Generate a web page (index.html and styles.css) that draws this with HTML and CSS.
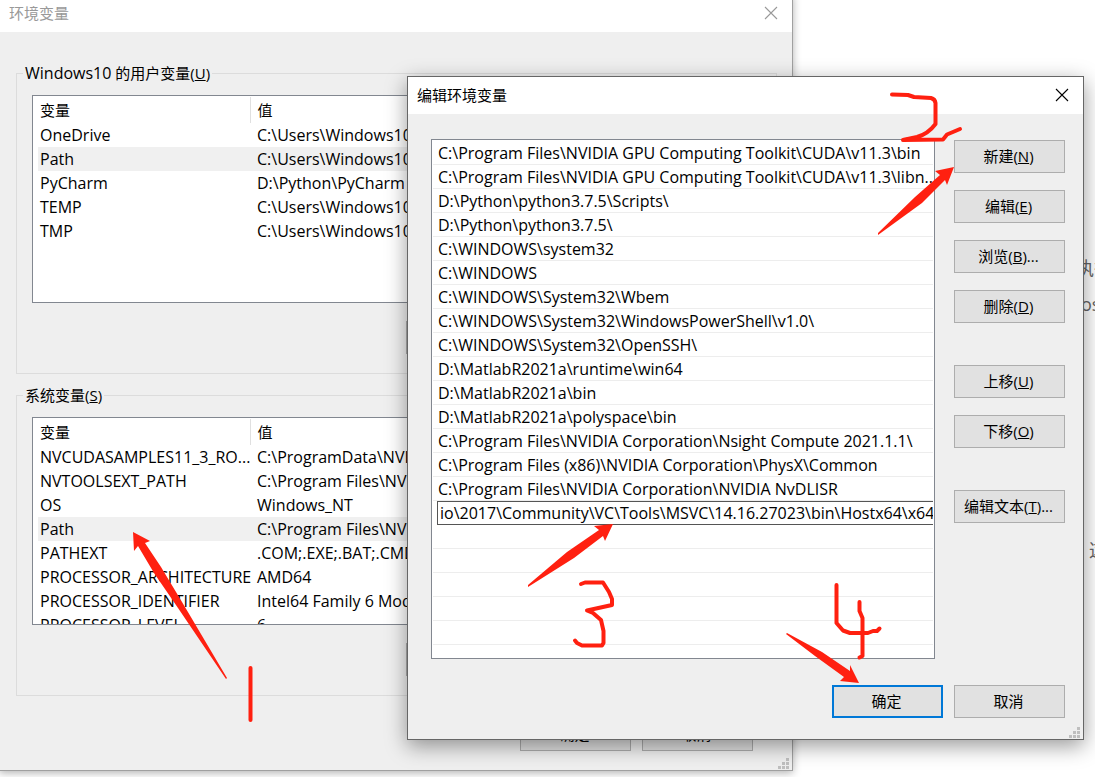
FILE: index.html
```html
<!DOCTYPE html>
<html lang="zh-CN">
<head>
    <meta charset="UTF-8">
    <title>环境变量</title>
    <link rel="stylesheet" href="styles.css">
</head>

<body>
    <div class="desktop">
        <p class="note note-run">执行</p>
        <p class="note note-os">os</p>
        <p class="note note-this">这</p>

        <section class="window env-window">
            <header class="title-bar">
                <h1>环境变量</h1>
                <button class="close" aria-label="关闭">
                    <svg width="14" height="14" viewBox="0 0 14 14"><path d="M1 1L13 13M13 1L1 13"/></svg>
                </button>
            </header>
            <div class="env-body">
                <fieldset class="group">
                    <legend><span class="latin">Windows10</span> 的用户变量(<u>U</u>)</legend>
                    <div class="list">
                        <table>
                            <tr><th>变量</th><th>值</th></tr>
                            <tr><td>OneDrive</td><td>C:\Users\Windows10\OneDrive</td></tr>
                            <tr class="selected"><td>Path</td><td>C:\Users\Windows10\AppData</td></tr>
                            <tr><td>PyCharm</td><td>D:\Python\PyCharm 2021\bin;</td></tr>
                            <tr><td>TEMP</td><td>C:\Users\Windows10\AppData</td></tr>
                            <tr><td>TMP</td><td>C:\Users\Windows10\AppData</td></tr>
                        </table>
                    </div>
                    <div class="buttons">
                        <button class="btn">新建(<u>N</u>)...</button>
                        <button class="btn">编辑(<u>E</u>)...</button>
                        <button class="btn">删除(<u>D</u>)</button>
                    </div>
                </fieldset>
                <fieldset class="group">
                    <legend>系统变量(<u>S</u>)</legend>
                    <div class="list">
                        <table>
                            <tr><th>变量</th><th>值</th></tr>
                            <tr><td>NVCUDASAMPLES11_3_RO...</td><td>C:\ProgramData\NVIDIA Corporation</td></tr>
                            <tr><td>NVTOOLSEXT_PATH</td><td>C:\Program Files\NVIDIA Corporation</td></tr>
                            <tr><td>OS</td><td>Windows_NT</td></tr>
                            <tr class="selected"><td>Path</td><td>C:\Program Files\NVIDIA GPU</td></tr>
                            <tr><td>PATHEXT</td><td>.COM;.EXE;.BAT;.CMD;.VBS</td></tr>
                            <tr><td>PROCESSOR_ARCHITECTURE</td><td>AMD64</td></tr>
                            <tr><td>PROCESSOR_IDENTIFIER</td><td>Intel64 Family 6 Model</td></tr>
                            <tr><td>PROCESSOR_LEVEL</td><td>6</td></tr>
                        </table>
                    </div>
                    <div class="buttons">
                        <button class="btn">新建(<u>W</u>)...</button>
                        <button class="btn">编辑(<u>I</u>)...</button>
                        <button class="btn">删除(<u>L</u>)</button>
                    </div>
                </fieldset>
                <div class="buttons env-actions">
                    <button class="btn">确定</button>
                    <button class="btn">取消</button>
                </div>
            </div>
            <svg class="grip" width="11" height="11" viewBox="0 0 11 11"><path d="M8 0h3v3h-3zM4 4h3v3h-3zM8 4h3v3h-3zM0 8h3v3h-3zM4 8h3v3h-3zM8 8h3v3h-3z"/></svg>
        </section>

        <section class="window edit-window">
            <header class="title-bar">
                <h2>编辑环境变量</h2>
                <button class="close" aria-label="关闭">
                    <svg width="14" height="14" viewBox="0 0 14 14"><path d="M1 1L13 13M13 1L1 13"/></svg>
                </button>
            </header>
            <div class="edit-body">
                <div class="edit-main">
                    <ul class="paths">
                        <li>C:\Program Files\NVIDIA GPU Computing Toolkit\CUDA\v11.3\bin</li>
                        <li>C:\Program Files\NVIDIA GPU Computing Toolkit\CUDA\v11.3\libn...</li>
                        <li>D:\Python\python3.7.5\Scripts\</li>
                        <li>D:\Python\python3.7.5\</li>
                        <li>C:\WINDOWS\system32</li>
                        <li>C:\WINDOWS</li>
                        <li>C:\WINDOWS\System32\Wbem</li>
                        <li>C:\WINDOWS\System32\WindowsPowerShell\v1.0\</li>
                        <li>C:\WINDOWS\System32\OpenSSH\</li>
                        <li>D:\MatlabR2021a\runtime\win64</li>
                        <li>D:\MatlabR2021a\bin</li>
                        <li>D:\MatlabR2021a\polyspace\bin</li>
                        <li>C:\Program Files\NVIDIA Corporation\Nsight Compute 2021.1.1\</li>
                        <li>C:\Program Files (x86)\NVIDIA Corporation\PhysX\Common</li>
                        <li>C:\Program Files\NVIDIA Corporation\NVIDIA NvDLISR</li>
                        <li class="editing"><input type="text" aria-label="路径" value="io\2017\Community\VC\Tools\MSVC\14.16.27023\bin\Hostx64\x64"></li>
                        <li></li>
                        <li></li>
                        <li></li>
                        <li></li>
                        <li></li>
                    </ul>
                    <div class="side">
                        <button class="btn">新建(<u>N</u>)</button>
                        <button class="btn">编辑(<u>E</u>)</button>
                        <button class="btn">浏览(<u>B</u>)...</button>
                        <button class="btn">删除(<u>D</u>)</button>
                        <button class="btn spaced">上移(<u>U</u>)</button>
                        <button class="btn">下移(<u>O</u>)</button>
                        <button class="btn spaced">编辑文本(<u>T</u>)...</button>
                    </div>
                </div>
                <div class="buttons">
                    <button class="btn default">确定</button>
                    <button class="btn">取消</button>
                </div>
            </div>
            <svg class="grip" width="11" height="11" viewBox="0 0 11 11"><path d="M8 0h3v3h-3zM4 4h3v3h-3zM8 4h3v3h-3zM0 8h3v3h-3zM4 8h3v3h-3zM8 8h3v3h-3z"/></svg>
        </section>

        <!-- hand-drawn steps 1 to 4 -->
        <svg class="marks" width="1095" height="777" viewBox="0 0 1095 777">
            <g class="arrow">
                <path d="M133 532L150 541L145 543L161 567L182 602L227 678L226 679L178 608L154 573L138 546L134 551Z"/>
                <path d="M954 167L935 171L940 175L915 197L878 233L878 235L922 203L945 180L947 185Z"/>
                <path d="M613 524L594 526L599 530L567 552L528 585L528 587L574 558L603 536L605 541Z"/>
                <path d="M859 683L850 665L850 671L822 652L787 633L786 634L815 656L844 677L840 681Z"/>
            </g>
            <g class="stroke">
                <path d="M250.500 668V720"/>
                <path d="M892 94.500L908 95L914 97L931 98Q935 99 935.500 103V124Q928 134 917 137L903 140L943 139.500L947 134.500L960 129"/>
                <path d="M581 584L585 582.500H603L609 592L612 599V605L587 610.500L593 613L601 620L603.500 631V643L602 645.500H582L577 643L575 640.500"/>
                <path d="M836.500 585V623L843 630.500L850 633H868L873 631H877L879.500 628.500"/>
                <path d="M859.500 602V611L862.500 618V656L859.500 657.500"/>
            </g>
        </svg>
    </div>
</body>
</html>
```

FILE: styles.css
```css
* {
    box-sizing: border-box;
}

body {
    margin: 0;
    background: #fff;
    color: #000;
    font-family: "Open Sans", "Noto Sans CJK SC", sans-serif;
    font-size: 15px;
    line-height: 20px;
}

.desktop {
    position: relative;
    min-height: 100vh;
    overflow: hidden;
}

/* article text behind the windows */
.note {
    position: absolute;
    margin: 0;
    font-size: 18px;
    color: #666;
    white-space: nowrap;
}

.note-run {
    left: 1076px;
    top: 258px;
}

.note-os {
    left: 1081px;
    top: 294px;
}

.note-this {
    left: 1089px;
    top: 540px;
}

.window {
    position: absolute;
    background: #efefef;
    border: 1px solid #a0a0a0;
}

.env-window {
    left: -1px;
    right: 302px;
    top: -6px;
    box-shadow: 0 2px 8px rgba(0, 0, 0, 0.3);
}

.edit-window {
    left: 407px;
    right: 11px;
    top: 76px;
    border-color: #666;
    box-shadow: 0 6px 20px rgba(0, 0, 0, 0.4);
}

.title-bar {
    display: flex;
    align-items: center;
    justify-content: space-between;
    height: 37px;
    padding: 0 14px 2px 9px;
    background: #fff;
}

.title-bar h1,
.title-bar h2 {
    margin: 0;
    font-size: 15px;
    font-weight: normal;
}

.env-window .title-bar h1 {
    color: #999;
}

.close {
    display: flex;
    padding: 0;
    border: none;
    background: none;
}

.close path {
    fill: none;
    stroke: #000;
    stroke-width: 1.1;
}

.env-window .close path {
    stroke: #999;
}

.env-body {
    display: flex;
    flex-direction: column;
    padding: 31px 15px 19px 16px;
}

.group {
    margin: 0 0 11px;
    padding: 12px 15px 19px;
    border: 1px solid #dcdcdc;
    min-width: 0;
}

.group legend {
    margin-left: -9px;
    padding: 0 2px;
}

.latin {
    font-size: 16px;
}

.list {
    height: 208px;
    margin-bottom: 18px;
    padding: 1px 1px 0 5px;
    border: 1px solid #828790;
    background: #fff;
    overflow: hidden;
}

.list table {
    width: 100%;
    table-layout: fixed;
    border-collapse: collapse;
}

.list th,
.list td {
    height: 24px;
    padding: 0 0 0 7px;
    text-align: left;
    font-weight: normal;
    white-space: nowrap;
}

.list td {
    font-size: 16px;
}

.list th {
    height: 26px;
}

.list th:first-child,
.list td:first-child {
    width: 212px;
    padding-left: 2px;
}

.list th:first-child {
    border-right: 1px solid #e0e0e0;
}

.list .selected {
    background: #f0f0f0;
}

.buttons {
    display: flex;
    justify-content: flex-end;
    gap: 11px;
}

.env-actions {
    margin-top: 11px;
    padding-right: 24px;
}

.btn {
    width: 111px;
    height: 33px;
    padding: 0 2px 2px 0;
    border: 1px solid #adadad;
    background: #e1e1e1;
    color: #000;
    font: inherit;
}

.btn.default {
    border: 2px solid #0078d7;
}

.edit-body {
    padding: 25px 18px 21px 23px;
}

.edit-main {
    display: flex;
    gap: 19px;
    margin-bottom: 26px;
}

.paths {
    flex: 1;
    min-width: 0;
    height: 520px;
    margin: 0;
    padding: 1px;
    border: 1px solid #828790;
    background: #fff;
    list-style: none;
    font-size: 16px;
}

.paths li {
    height: 24px;
    padding-left: 5px;
    border-bottom: 1px solid #ededed;
    line-height: 24px;
    white-space: nowrap;
}

.paths .editing {
    padding-left: 4px;
    border-bottom: none;
}

.editing input {
    display: block;
    width: 100%;
    height: 24px;
    padding: 0 0 0 2px;
    border: 1px solid #555;
    border-right: none;
    border-radius: 0;
    background: #fff;
    color: #000;
    font: inherit;
    outline: none;
}

.side {
    display: flex;
    flex-direction: column;
    gap: 17px;
    padding-top: 1px;
}

.side .spaced {
    margin-top: 25px;
}

.grip {
    position: absolute;
    right: 3px;
    bottom: 1px;
    fill: #bfbfbf;
}

.marks {
    position: absolute;
    left: 0;
    top: 0;
    pointer-events: none;
}

.arrow {
    fill: #ff2010;
}

.stroke {
    fill: none;
    stroke: #ff2010;
    stroke-width: 4;
    stroke-linecap: round;
    stroke-linejoin: round;
}
```
